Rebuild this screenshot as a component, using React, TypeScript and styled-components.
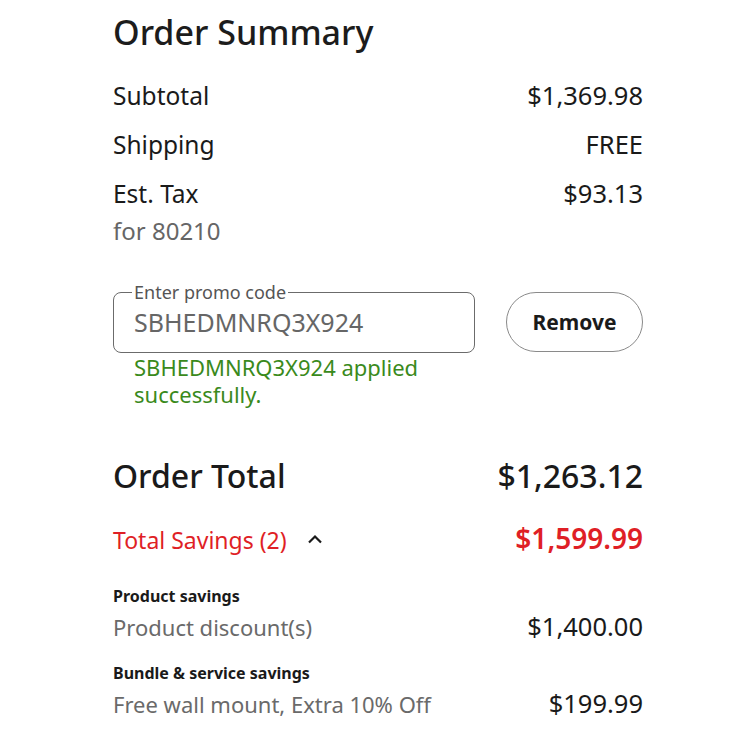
import React from 'react';
import styled, { createGlobalStyle } from 'styled-components';

const GlobalStyle = createGlobalStyle`
  body {
    margin: 0;
    background: #fff;
    font-family: "Noto Sans", "Open Sans", sans-serif;
    color: #1a1a1a;
  }
`;

const Page = styled.div`
  width: 530px;
  padding: 6px 0 0 113px;
`;

const Title = styled.h2`
  margin: 0 0 13px;
  font-size: 34px;
  font-weight: 500;
  line-height: 52px;
  color: #1c1c1c;
`;

const Row = styled.div`
  display: flex;
  justify-content: space-between;
  align-items: baseline;
`;

const LineLabel = styled.div`
  font-size: 24.5px;
  line-height: 48px;
`;

const LineValue = styled.div`
  font-size: 25.5px;
  line-height: 48px;
`;

const SubNote = styled.div`
  font-size: 24px;
  line-height: 36px;
  color: #666;
  margin-top: -5px;
`;

const PromoArea = styled.div`
  display: flex;
  align-items: flex-start;
  gap: 31px;
  margin-top: 34px;
`;

const PromoColumn = styled.div`
  width: 362px;
`;

const Field = styled.fieldset`
  margin: 0;
  height: 70px;
  box-sizing: border-box;
  padding: 0 20px;
  border: 1px solid #6b6b6b;
  border-radius: 8px;
`;

const FieldLegend = styled.legend`
  font-size: 18px;
  color: #555;
  padding: 0 2px;
  margin-left: -2px;
  line-height: 18px;
`;

const FieldValue = styled.div`
  font-size: 25px;
  color: #666;
  line-height: 30px;
  margin-top: 6px;
`;

const Success = styled.div`
  padding-left: 21px;
  margin-top: 1px;
  font-size: 22px;
  line-height: 27px;
  color: #3a8a1c;
`;

const PillButton = styled.button`
  margin-top: 9px;
  width: 137px;
  height: 60px;
  box-sizing: border-box;
  border: 1px solid #8a8a8a;
  border-radius: 30px;
  background: #fff;
  font-family: inherit;
  font-size: 21px;
  font-weight: 700;
  color: #1a1a1a;
`;

const TotalRow = styled(Row)`
  margin-top: 46px;
`;

const TotalText = styled.div`
  font-size: 32px;
  font-weight: 500;
  line-height: 44px;
`;

const SavingsRow = styled(Row)`
  margin-top: 22px;
`;

const SavingsLabel = styled.div`
  display: flex;
  align-items: center;
  gap: 20px;
  font-size: 23px;
  line-height: 36px;
  color: #df1f26;
`;

const SavingsValue = styled.div`
  font-size: 28px;
  font-weight: 600;
  line-height: 36px;
  color: #df1f26;
`;

const GroupTitle = styled.div<{ first?: boolean }>`
  font-size: 16px;
  font-weight: 700;
  line-height: 22px;
  margin-top: ${p => (p.first ? '27px' : '18px')};
`;

const DetailRow = styled(Row)`
  margin-top: 2px;
`;

const DetailLabel = styled.div`
  font-size: 22px;
  line-height: 34px;
  color: #6a6a6a;
`;

const DetailValue = styled.div`
  font-size: 25.5px;
  line-height: 34px;
`;

const Chevron = () => (
  <svg width="16" height="10" viewBox="0 0 16 10" fill="none" style={{ marginBottom: 3 }}>
    <path d="M2 8.5L8 2.5L14 8.5" stroke="#1a1a1a" strokeWidth="2.2" />
  </svg>
);

const lines = [
  { label: 'Subtotal', value: '$1,369.98' },
  { label: 'Shipping', value: 'FREE' },
  { label: 'Est. Tax', value: '$93.13' },
];

const savings = [
  { group: 'Product savings', label: 'Product discount(s)', value: '$1,400.00' },
  { group: 'Bundle & service savings', label: 'Free wall mount, Extra 10% Off', value: '$199.99' },
];

export default function App() {
  return (
    <Page>
      <GlobalStyle />
      <Title>Order Summary</Title>
      {lines.map(l => (
        <Row key={l.label}>
          <LineLabel>{l.label}</LineLabel>
          <LineValue>{l.value}</LineValue>
        </Row>
      ))}
      <SubNote>for 80210</SubNote>

      <PromoArea>
        <PromoColumn>
          <Field>
            <FieldLegend>Enter promo code</FieldLegend>
            <FieldValue>SBHEDMNRQ3X924</FieldValue>
          </Field>
          <Success>SBHEDMNRQ3X924 applied successfully.</Success>
        </PromoColumn>
        <PillButton>Remove</PillButton>
      </PromoArea>

      <TotalRow>
        <TotalText>Order Total</TotalText>
        <TotalText>$1,263.12</TotalText>
      </TotalRow>
      <SavingsRow>
        <SavingsLabel>
          Total Savings (2)
          <Chevron />
        </SavingsLabel>
        <SavingsValue>$1,599.99</SavingsValue>
      </SavingsRow>

      {savings.map((s, i) => (
        <div key={s.group}>
          <GroupTitle first={i === 0}>{s.group}</GroupTitle>
          <DetailRow>
            <DetailLabel>{s.label}</DetailLabel>
            <DetailValue>{s.value}</DetailValue>
          </DetailRow>
        </div>
      ))}
    </Page>
  );
}
